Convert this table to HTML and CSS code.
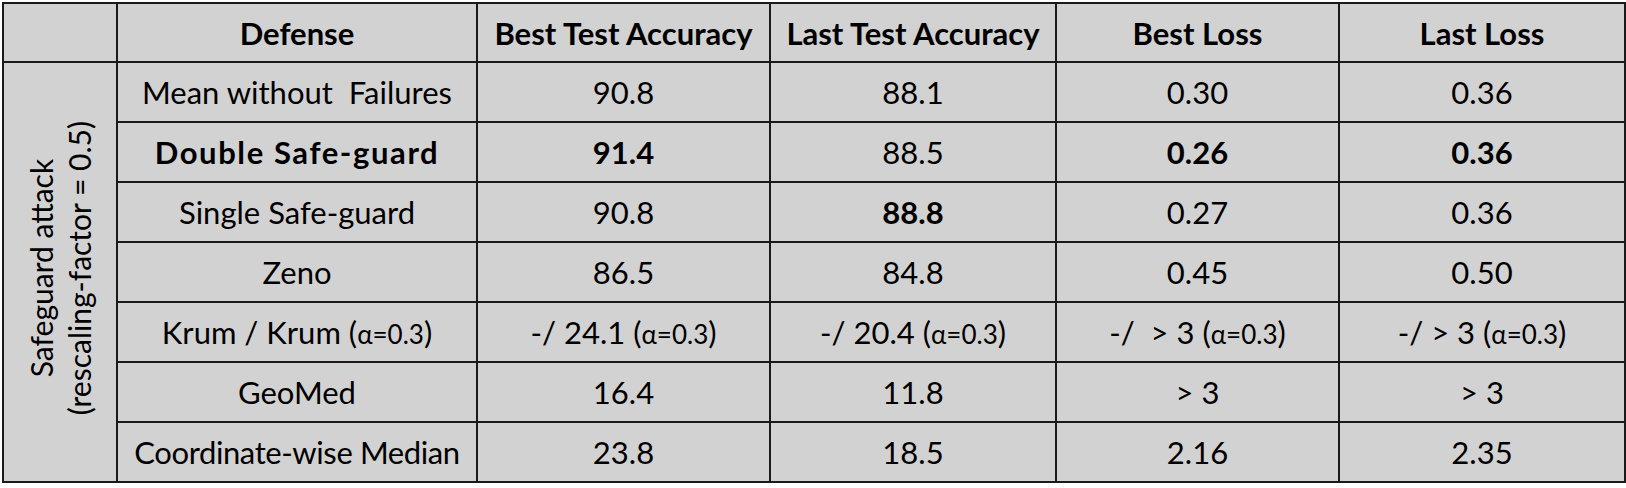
FILE: index.html
```html
<!DOCTYPE html>
<html lang="en">
<head>
    <meta charset="UTF-8">
    <title>Safeguard attack results</title>
    <link rel="stylesheet" href="styles.css">
</head>
<body>
    <table class="results">
        <colgroup>
            <col class="col-group">
            <col class="col-defense">
            <col class="col-best-acc">
            <col class="col-last-acc">
            <col class="col-best-loss">
            <col class="col-last-loss">
        </colgroup>
        <thead>
            <tr>
                <th></th>
                <th>Defense</th>
                <th>Best Test Accuracy</th>
                <th>Last Test Accuracy</th>
                <th>Best Loss</th>
                <th>Last Loss</th>
            </tr>
        </thead>
        <tbody>
            <tr>
                <td class="group" rowspan="7">
                    <div class="group-label">Safeguard attack<br>(rescaling-factor = 0.5)</div>
                </td>
                <td>Mean without&nbsp; Failures</td>
                <td>90.8</td>
                <td>88.1</td>
                <td>0.30</td>
                <td>0.36</td>
            </tr>
            <tr>
                <td><strong class="best-name">Double Safe-guard</strong></td>
                <td><strong>91.4</strong></td>
                <td>88.5</td>
                <td><strong>0.26</strong></td>
                <td><strong>0.36</strong></td>
            </tr>
            <tr>
                <td>Single Safe-guard</td>
                <td>90.8</td>
                <td><strong>88.8</strong></td>
                <td>0.27</td>
                <td>0.36</td>
            </tr>
            <tr>
                <td>Zeno</td>
                <td>86.5</td>
                <td>84.8</td>
                <td>0.45</td>
                <td>0.50</td>
            </tr>
            <tr>
                <td>Krum / Krum (<span class="small">α=0.3</span>)</td>
                <td>-/ 24.1 (<span class="small">α=0.3</span>)</td>
                <td>-/ 20.4 (<span class="small">α=0.3</span>)</td>
                <td>-/&nbsp; &gt; 3 (<span class="small">α=0.3</span>)</td>
                <td>-/ &gt; 3 (<span class="small">α=0.3</span>)</td>
            </tr>
            <tr>
                <td>GeoMed</td>
                <td>16.4</td>
                <td>11.8</td>
                <td>&gt; 3</td>
                <td>&gt; 3</td>
            </tr>
            <tr>
                <td><span class="tight">Coordinate-wise Median</span></td>
                <td>23.8</td>
                <td>18.5</td>
                <td>2.16</td>
                <td>2.35</td>
            </tr>
        </tbody>
    </table>
</body>
</html>
```

FILE: styles.css
```css
* {
    margin: 0;
    padding: 0;
    box-sizing: border-box;
}

body {
    background-color: #fff;
    padding: 2px 0 0 2px;
    font-family: 'Lato', 'Liberation Sans', sans-serif;
    color: #000;
}

/* Results table */
.results {
    width: 1622px;
    border-collapse: collapse;
    table-layout: fixed;
    background-color: #d3d2d3;
    font-size: 31px;
}

.col-group { width: 114px; }
.col-defense { width: 360px; }
.col-best-acc { width: 293px; }
.col-last-acc { width: 286px; }
.col-best-loss { width: 283px; }
.col-last-loss { width: 286px; }

.results th,
.results td {
    border: 2px solid #1a1a1a;
    text-align: center;
    vertical-align: middle;
    height: 60px;
    padding: 0;
    white-space: nowrap;
}

.results th {
    font-weight: bold;
    height: 59px;
}

.results .small {
    font-size: 26px;
}

/* bold name is set wider in the original */
.best-name {
    letter-spacing: 1.6px;
}

.tight {
    letter-spacing: -0.4px;
}

/* Rotated label in the first column */
.group-label {
    display: inline-block;
    writing-mode: vertical-rl;
    transform: rotate(180deg);
    line-height: 38px;
    font-size: 30px;
    white-space: nowrap;
}
```
